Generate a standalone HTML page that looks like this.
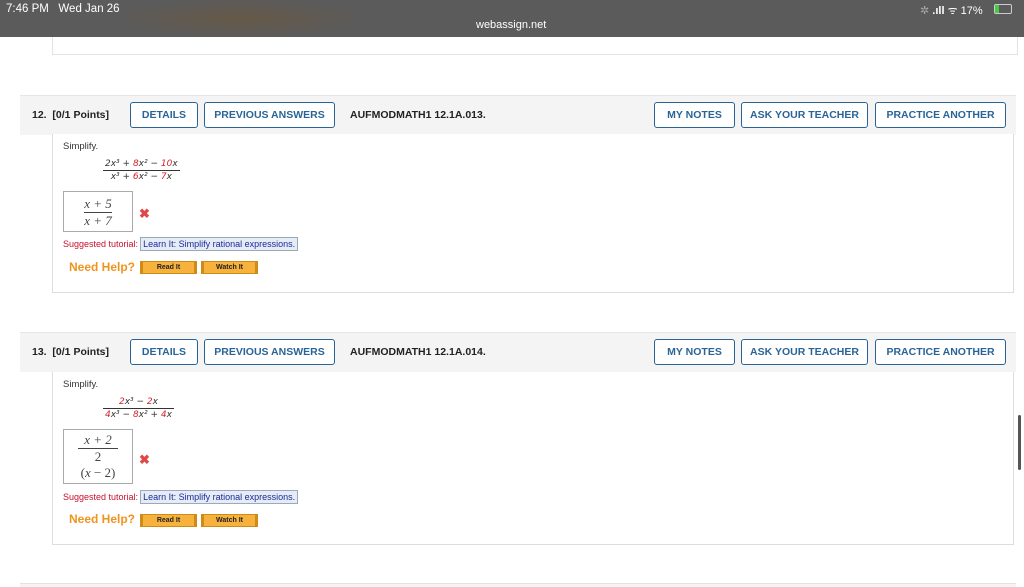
<!DOCTYPE html>
<html><head><style>
body{margin:0;width:1024px;height:586px;background:#fff;position:relative;overflow:hidden;font-family:"Liberation Sans",sans-serif;}
.top{position:absolute;left:0;top:0;width:1024px;height:37px;background:#5b5b5b;}
.blur{position:absolute;left:120px;top:0;width:240px;height:37px;background:radial-gradient(ellipse at center,#665a48 0%,#605a52 40%,rgba(91,91,91,0) 75%);}
.abs{position:absolute;}
.hdr{position:absolute;left:20px;width:996px;height:39px;background:#f4f4f4;border-top:1px solid #e6e6e6;}
.btn{position:absolute;top:6px;height:24px;border:1.5px solid #2a6496;border-radius:3px;background:#fff;color:#2a6496;font-size:10.5px;font-weight:bold;line-height:24px;text-align:center;box-sizing:content-box;}
.qn{position:absolute;top:13px;font-size:10.5px;font-weight:bold;color:#222;}
.box{position:absolute;left:52px;width:960px;border:1px solid #ddd;border-top:none;background:#fff;}
.simp{position:absolute;left:10px;font-size:9.5px;color:#333;}
.frac{position:absolute;font-family:"DejaVu Sans",sans-serif;font-size:9px;color:#333;text-align:center;}
.frac div{padding:1px 2px;}
.r{color:#d2232a;}
.ans{position:absolute;left:10px;border:1px solid #aaa;background:#fff;font-family:"Liberation Serif",serif;font-size:13px;color:#444;text-align:center;}
.x{position:absolute;color:#e04848;font-size:13px;font-weight:bold;}
.sug{position:absolute;left:10px;font-size:9px;color:#c8102e;}
.sug span{display:inline-block;border:1px solid #9ab;background:#e6ecf5;color:#1a2a9a;padding:1px 2px;margin-left:2px;}
.help{position:absolute;left:16px;font-size:12px;font-weight:bold;color:#f0941e;}
.ob{position:absolute;height:11px;background:#f7b13d;border:1px solid #d08a16;border-left:3px solid #d08a16;border-right:3px solid #d08a16;font-size:7px;font-weight:bold;line-height:11px;text-align:center;color:#222;}
</style></head><body>
<div class="top"><div class="blur"></div>
<div class="abs" style="left:6px;top:3px;color:#fff;font-size:11.5px;">7:46 PM&nbsp;&nbsp;&nbsp;Wed Jan 26</div>
<div class="abs" style="left:476px;top:19px;color:#fff;font-size:11px;">webassign.net</div>
<div class="abs" style="left:920px;top:3px;color:#fff;font-size:11px;"><span style="color:#aaa">✲</span> <b>.ıll</b> ᯤ 17%</div>
<div class="abs" style="left:994px;top:4px;width:16px;height:8px;border:1px solid #ccc;border-radius:2px;"><div style="width:4px;height:8px;background:#4c4"></div></div>
</div>
<div class="abs" style="left:52px;top:37px;width:964px;height:17px;border:1px solid #e2e2e2;border-top:none;"></div>

<div class="hdr" style="top:95px;">
<div class="qn" style="left:12px;">12.&nbsp; [0/1 Points]</div>
<div class="btn" style="left:110px;width:66px;">DETAILS</div>
<div class="btn" style="left:184px;width:129px;">PREVIOUS ANSWERS</div>
<div class="qn" style="left:330px;">AUFMODMATH1 12.1A.013.</div>
<div class="btn" style="left:634px;width:79px;">MY NOTES</div>
<div class="btn" style="left:721px;width:125px;">ASK YOUR TEACHER</div>
<div class="btn" style="left:855px;width:129px;">PRACTICE ANOTHER</div>
</div>
<div class="box" style="top:134px;height:158px;">
<div class="simp" style="top:7px;">Simplify.</div>
<div class="frac" style="left:50px;top:24px;"><div style="border-bottom:1px solid #333;"><i>2x³ + <span class="r">8</span>x² − <span class="r">10</span>x</i></div><div><i>x³ + <span class="r">6</span>x² − <span class="r">7</span>x</i></div></div>
<div class="ans" style="top:57px;width:68px;height:39px;"><div style="display:inline-block;margin-top:4px;"><div style="border-bottom:1px solid #444;font-style:italic;">x + 5</div><div style="font-style:italic;">x + 7</div></div></div>
<div class="x" style="left:86px;top:72px;">✖</div>
<div class="sug" style="top:103px;">Suggested tutorial:<span>Learn It: Simplify rational expressions.</span></div>
<div class="help" style="top:126px;">Need Help?</div>
<div class="ob" style="left:87px;top:127px;width:51px;">Read It</div>
<div class="ob" style="left:148px;top:127px;width:51px;">Watch It</div>
</div>

<div class="hdr" style="top:332px;">
<div class="qn" style="left:12px;">13.&nbsp; [0/1 Points]</div>
<div class="btn" style="left:110px;width:66px;">DETAILS</div>
<div class="btn" style="left:184px;width:129px;">PREVIOUS ANSWERS</div>
<div class="qn" style="left:330px;">AUFMODMATH1 12.1A.014.</div>
<div class="btn" style="left:634px;width:79px;">MY NOTES</div>
<div class="btn" style="left:721px;width:125px;">ASK YOUR TEACHER</div>
<div class="btn" style="left:855px;width:129px;">PRACTICE ANOTHER</div>
</div>
<div class="box" style="top:372px;height:172px;">
<div class="simp" style="top:7px;">Simplify.</div>
<div class="frac" style="left:50px;top:24px;"><div style="border-bottom:1px solid #333;"><i><span class="r">2</span>x³ − <span class="r">2</span>x</i></div><div><i><span class="r">4</span>x³ − <span class="r">8</span>x² + <span class="r">4</span>x</i></div></div>
<div class="ans" style="top:57px;width:68px;height:53px;"><div style="display:inline-block;margin-top:2px;"><div style="border-bottom:1px solid #444;font-style:italic;padding:0 6px;">x + 2</div><div>2</div><div>(<i>x</i> − 2)</div></div></div>
<div class="x" style="left:86px;top:80px;">✖</div>
<div class="sug" style="top:118px;">Suggested tutorial:<span>Learn It: Simplify rational expressions.</span></div>
<div class="help" style="top:140px;">Need Help?</div>
<div class="ob" style="left:87px;top:142px;width:51px;">Read It</div>
<div class="ob" style="left:148px;top:142px;width:51px;">Watch It</div>
</div>
<div class="abs" style="left:20px;top:583px;width:996px;height:3px;border-top:1px solid #e2e2e2;background:#f4f4f4;"></div>
<div class="abs" style="left:1018px;top:415px;width:3px;height:55px;background:#555;border-radius:2px;"></div>
</body></html>
